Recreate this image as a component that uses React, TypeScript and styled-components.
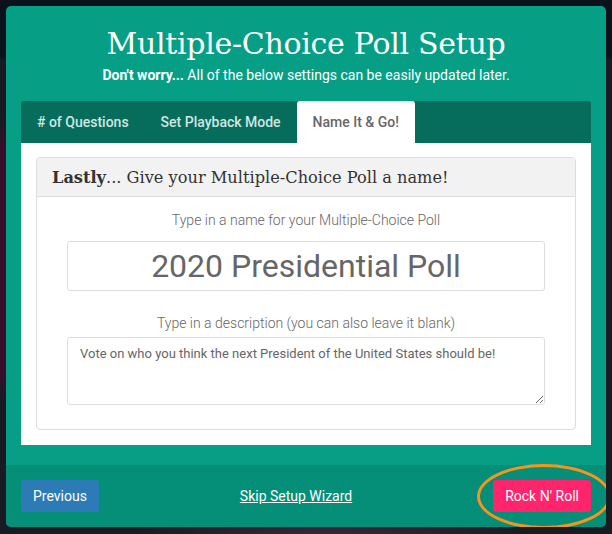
import React, { useState } from 'react';
import styled, { createGlobalStyle } from 'styled-components';

const GlobalStyle = createGlobalStyle`
  html, body {
    margin: 0;
    padding: 0;
    height: 100%;
  }
  body {
    font-family: Roboto, "Liberation Sans", Arial, sans-serif;
    background:
      radial-gradient(ellipse 60px 140px at 0px 260px, #3a0d2c 0%, #3a0d2c 80%, transparent 100%),
      radial-gradient(ellipse 200px 40px at 330px 540px, #3a2a3c 0%, transparent 100%),
      linear-gradient(180deg, #0b121b 0px, #0b121b 56px, #181c22 60px, #181c22 534px);
  }
`;

const Backdrop = styled.div`
  width: 612px;
  height: 534px;
  box-sizing: border-box;
  padding: 6px 6px 0 6px;
`;

const Modal = styled.div`
  width: 600px;
  height: 521px;
  background: #069f86;
  border-radius: 5px;
  display: flex;
  flex-direction: column;
  overflow: hidden;
`;

const Header = styled.div`
  display: flex;
  flex-direction: column;
  align-items: center;
  padding: 20px 15px 0;
  color: #fff;
`;

const Title = styled.h1`
  margin: 0;
  font-family: "DejaVu Serif", "Liberation Serif", serif;
  font-weight: 300;
  font-size: 30px;
  line-height: 36px;
  letter-spacing: -0.3px;
`;

const Subtitle = styled.p`
  margin: 3px 0 0;
  font-size: 14px;
  line-height: 20px;
  b {
    font-weight: 700;
  }
`;

const Body = styled.div`
  margin: 16px 15px 0;
  display: flex;
  flex-direction: column;
`;

const TabBar = styled.div`
  display: flex;
  height: 42px;
  background: #066c5c;
  border-radius: 3px 3px 0 0;
`;

const Tab = styled.button<{ $active?: boolean }>`
  border: none;
  margin: 0;
  font-family: Roboto, "Liberation Sans", Arial, sans-serif;
  font-size: 14px;
  font-weight: 500;
  padding: 0 16px;
  height: 42px;
  cursor: pointer;
  border-radius: 3px 3px 0 0;
  background: ${(p) => (p.$active ? '#fff' : 'transparent')};
  color: ${(p) => (p.$active ? '#666' : '#cfe6e1')};
`;

const Panel = styled.div`
  background: #fff;
  height: 302px;
  box-sizing: border-box;
  padding: 14px 15px 15px;
`;

const Card = styled.div`
  border: 1px solid #ddd;
  border-radius: 4px;
  height: 273px;
  box-sizing: border-box;
  display: flex;
  flex-direction: column;
  overflow: hidden;
`;

const CardHeader = styled.div`
  background: #f2f2f2;
  border-bottom: 1px solid #ddd;
  height: 39px;
  box-sizing: border-box;
  display: flex;
  align-items: center;
  padding: 0 15px;
  font-family: "DejaVu Serif", "Liberation Serif", serif;
  font-size: 16.2px;
  color: #333;
  b {
    font-weight: 700;
  }
`;

const CardBody = styled.div`
  padding: 13px 30px 0;
  display: flex;
  flex-direction: column;
  align-items: center;
`;

const Label = styled.label<{ $gap: number }>`
  font-size: 14px;
  line-height: 20px;
  color: #666;
  font-weight: 300;
  margin-bottom: ${(p) => p.$gap}px;
`;

const NameInput = styled.input`
  width: 100%;
  height: 50px;
  box-sizing: border-box;
  border: 1px solid #ddd;
  border-radius: 3px;
  text-align: center;
  font-family: Roboto, "Liberation Sans", Arial, sans-serif;
  font-size: 32px;
  color: #666;
  outline: none;
  margin-bottom: 22px;
`;

const DescInput = styled.textarea`
  width: 100%;
  height: 68px;
  box-sizing: border-box;
  border: 1px solid #ddd;
  border-radius: 3px;
  padding: 6px 12px;
  font-family: Roboto, "Liberation Sans", Arial, sans-serif;
  font-size: 13px;
  line-height: 20px;
  color: #666;
  outline: none;
  resize: vertical;
`;

const Footer = styled.div`
  margin-top: auto;
  height: 62px;
  background: #058f79;
  display: flex;
  align-items: center;
  justify-content: space-between;
  padding: 0 15px;
`;

const Button = styled.button<{ $variant: 'blue' | 'pink' }>`
  height: 32px;
  border: none;
  border-radius: 3px;
  padding: 0 12px;
  font-family: Roboto, "Liberation Sans", Arial, sans-serif;
  font-size: 14px;
  color: #fff;
  cursor: pointer;
  background: ${(p) => (p.$variant === 'blue' ? '#2c7bb6' : '#fe256c')};
`;

const SkipLink = styled.a`
  color: #fff;
  font-size: 14px;
  text-decoration: underline;
  cursor: pointer;
`;

const Highlight = styled.div`
  position: relative;
`;

const Ring = styled.span`
  position: absolute;
  left: -16px;
  top: -16px;
  width: 128px;
  height: 59px;
  border: 3px solid #f7941d;
  border-radius: 50%;
  pointer-events: none;
`;

const tabs = ['# of Questions', 'Set Playback Mode', 'Name It & Go!'];

const App: React.FC = () => {
  const [active, setActive] = useState(2);
  const [name, setName] = useState('2020 Presidential Poll');
  const [desc, setDesc] = useState(
    'Vote on who you think the next President of the United States should be!'
  );

  return (
    <>
      <GlobalStyle />
      <Backdrop>
        <Modal>
          <Header>
            <Title>Multiple-Choice Poll Setup</Title>
            <Subtitle>
              <b>Don't worry...</b> All of the below settings can be easily updated later.
            </Subtitle>
          </Header>
          <Body>
            <TabBar>
              {tabs.map((t, i) => (
                <Tab key={t} $active={i === active} onClick={() => setActive(i)}>
                  {t}
                </Tab>
              ))}
            </TabBar>
            <Panel>
              <Card>
                <CardHeader>
                  <span>
                    <b>Lastly</b>... Give your Multiple-Choice Poll a name!
                  </span>
                </CardHeader>
                <CardBody>
                  <Label $gap={11}>Type in a name for your Multiple-Choice Poll</Label>
                  <NameInput value={name} onChange={(e) => setName(e.target.value)} />
                  <Label $gap={4}>Type in a description (you can also leave it blank)</Label>
                  <DescInput value={desc} onChange={(e) => setDesc(e.target.value)} />
                </CardBody>
              </Card>
            </Panel>
          </Body>
          <Footer>
            <Button $variant="blue">Previous</Button>
            <SkipLink>Skip Setup Wizard</SkipLink>
            <Highlight>
              <Button $variant="pink">Rock N' Roll</Button>
              <Ring />
            </Highlight>
          </Footer>
        </Modal>
      </Backdrop>
    </>
  );
};

export default App;
